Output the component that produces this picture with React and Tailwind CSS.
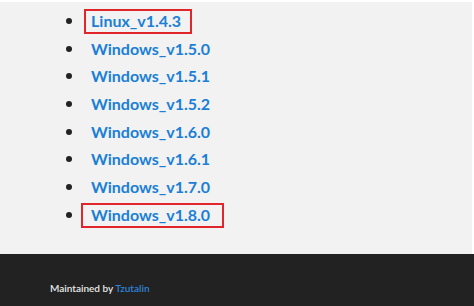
export default function App() {
  const versions = [
    'Linux_v1.4.3',
    'Windows_v1.5.0',
    'Windows_v1.5.1',
    'Windows_v1.5.2',
    'Windows_v1.6.0',
    'Windows_v1.6.1',
    'Windows_v1.7.0',
    'Windows_v1.8.0',
  ]

  // boxes drawn round the first and last release
  const boxed = {
    'Linux_v1.4.3': '-left-[7px] -right-[11px] -top-[4px] -bottom-[5px]',
    'Windows_v1.8.0': '-left-[10px] -right-[14px] -top-[4px] -bottom-[5px]',
  }

  return (
    <div className="w-[474px] h-[306px] bg-white overflow-hidden" style={{ fontFamily: 'Lato, "Open Sans", sans-serif' }}>
      <div className="mt-[2px] mr-[2px] h-[252px] bg-[#f2f2f2]">
        <ul className="pt-[5px] pl-[91px]">
          {versions.map((v) => (
            <li key={v} className="relative h-[27.7px] flex items-center">
              <span className="absolute -left-[25px] top-1/2 -translate-y-1/2 w-[6px] h-[6px] rounded-full bg-[#222]" />
              <a href="#" className="relative text-[16px] font-bold text-[#1b7fd6] leading-none">
                {v}
                {boxed[v] && (
                  <span className={`absolute border-2 border-[#e0262b] ${boxed[v]}`} />
                )}
              </a>
            </li>
          ))}
        </ul>
      </div>
      <footer className="h-[52px] bg-[#222] pl-[50px] pt-[27px] text-[10px] font-semibold leading-[14px] text-[#e8e8e8]">
        Maintained by <a href="#" className="text-[#2f84d6]">Tzutalin</a>
      </footer>
    </div>
  )
}
